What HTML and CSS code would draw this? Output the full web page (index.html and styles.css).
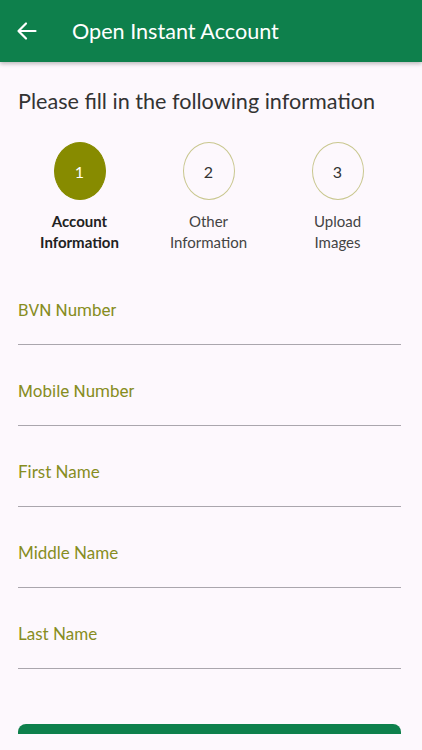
FILE: index.html
```html
<!DOCTYPE html>
<html lang="en">
<head>
  <meta charset="UTF-8">
  <meta name="viewport" content="width=device-width, initial-scale=1.0">
  <title>Open Instant Account</title>
  <link rel="stylesheet" href="styles.css">
</head>
<body>
  <div class="screen">
    <header class="topbar">
      <svg class="back" width="24" height="24" viewBox="0 0 24 24">
        <path d="M20.5 12H4M11 4.5L3.5 12l7.5 7.5" fill="none" stroke="#fff" stroke-width="2.2" stroke-linecap="round" stroke-linejoin="round"/>
      </svg>
      <h1>Open Instant Account</h1>
    </header>

    <main class="content">
      <p class="intro">Please fill in the following information</p>

      <div class="steps">
        <div class="step active">
          <div class="dot">1</div>
          <div class="step-name">Account<br>Information</div>
        </div>
        <div class="step">
          <div class="dot">2</div>
          <div class="step-name">Other<br>Information</div>
        </div>
        <div class="step">
          <div class="dot">3</div>
          <div class="step-name">Upload<br>Images</div>
        </div>
      </div>

      <form id="accountForm">
        <label class="field roboto">
          <span>BVN Number</span>
          <input type="text">
        </label>
        <label class="field roboto">
          <span>Mobile Number</span>
          <input type="text">
        </label>
        <label class="field">
          <span>First Name</span>
          <input type="text">
        </label>
        <label class="field">
          <span>Middle Name</span>
          <input type="text">
        </label>
        <label class="field">
          <span>Last Name</span>
          <input type="text">
        </label>
        <button type="submit" class="next" aria-label="Next"></button>
      </form>
    </main>

    <div class="bottom-inset"></div>
  </div>
</body>
</html>
```

FILE: styles.css
```css
html, body {
  margin: 0;
  padding: 0;
  background-color: #fdf8fd;
}
body {
  font-family: Lato, "Open Sans", sans-serif;
  color: #333;
}
.screen {
  height: 750px;
  display: flex;
  flex-direction: column;
}
.topbar {
  flex: none;
  height: 62px;
  background-color: #0e804c;
  display: flex;
  align-items: center;
  padding-left: 15px;
  box-shadow: 0 2px 4px rgba(0, 0, 0, 0.25);
  position: relative;
  z-index: 1;
}
.back {
  margin-right: 33px;
}
.topbar h1 {
  margin: 0;
  font-size: 21.6px;
  font-weight: 400;
  color: #fff;
}
.content {
  flex: 1;
  min-height: 0;
  overflow: hidden;
  padding: 0 21px 0 18px;
}
.bottom-inset {
  flex: none;
  height: 16px;
  background-color: #fdf8fd;
}
.intro {
  margin: 26px 0 0;
  font-size: 21.6px;
  line-height: 26px;
  color: #333;
}
.steps {
  display: flex;
  margin: 28px 0 0 -3px;
  width: 387px;
}
.step {
  flex: 1;
  display: flex;
  flex-direction: column;
  align-items: center;
}
.dot {
  width: 50px;
  height: 56px;
  border-radius: 50%;
  border: 1px solid #c9c78f;
  display: flex;
  align-items: center;
  justify-content: center;
  font-size: 16px;
  color: #333;
}
.step.active .dot {
  background-color: #878b00;
  border-color: #878b00;
  color: #fff;
}
.step-name {
  margin-top: 11px;
  text-align: center;
  font-size: 15px;
  line-height: 21px;
  color: #444;
}
.step.active .step-name {
  font-weight: bold;
  color: #222;
}
form {
  margin-top: 46px;
}
.field {
  display: block;
  height: 81px;
}
.field span {
  display: block;
  font-size: 17px;
  line-height: 22px;
  color: #878d1f;
}
.field.roboto span {
  font-family: Roboto, sans-serif;
}
.field input {
  display: block;
  width: 100%;
  height: 21px;
  margin-top: 2px;
  padding: 0;
  border: none;
  border-bottom: 1.5px solid #aaa6ad;
  background: transparent;
  outline: none;
}
.next {
  display: block;
  width: 100%;
  height: 48px;
  margin-top: 20px;
  border: none;
  border-radius: 8px;
  background-color: #0e804c;
}
```
